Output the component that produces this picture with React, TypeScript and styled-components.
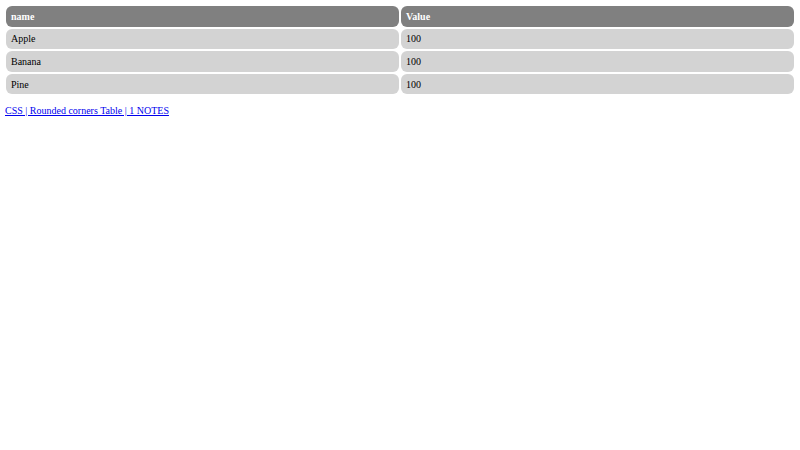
import React from "react";
import styled, { createGlobalStyle } from "styled-components";

const Global = createGlobalStyle`
  body {
    margin: 4px;
    background: #ffffff;
    font-family: "Liberation Serif", "Times New Roman", serif;
    font-size: 10px;
  }
`;

const Table = styled.table`
  width: 100%;
  border-collapse: separate;
  border-spacing: 2px;
  font-size: 10px;
`;

const Cell = styled.td<{ $head?: boolean }>`
  padding: 4.8px 5px;
  border-radius: 6px;
  text-align: left;
  background: ${(p) => (p.$head ? "#808080" : "#d3d3d3")};
  color: ${(p) => (p.$head ? "#ffffff" : "#000000")};
  font-weight: ${(p) => (p.$head ? "bold" : "normal")};
  width: 50%;
`;

const Footer = styled.div`
  margin-top: 9px;
  padding-left: 1px;
`;

const Link = styled.a`
  color: #0000ee;
  text-decoration: underline;
`;

const rows = [
  ["Apple", "100"],
  ["Banana", "100"],
  ["Pine", "100"],
];

export default function App() {
  return (
    <>
      <Global />
      <Table>
        <thead>
          <tr>
            <Cell as="th" $head>name</Cell>
            <Cell as="th" $head>Value</Cell>
          </tr>
        </thead>
        <tbody>
          {rows.map(([n, v]) => (
            <tr key={n}>
              <Cell>{n}</Cell>
              <Cell>{v}</Cell>
            </tr>
          ))}
        </tbody>
      </Table>
      <Footer>
        <Link href="#">CSS | Rounded corners Table | 1 NOTES</Link>
      </Footer>
    </>
  );
}
